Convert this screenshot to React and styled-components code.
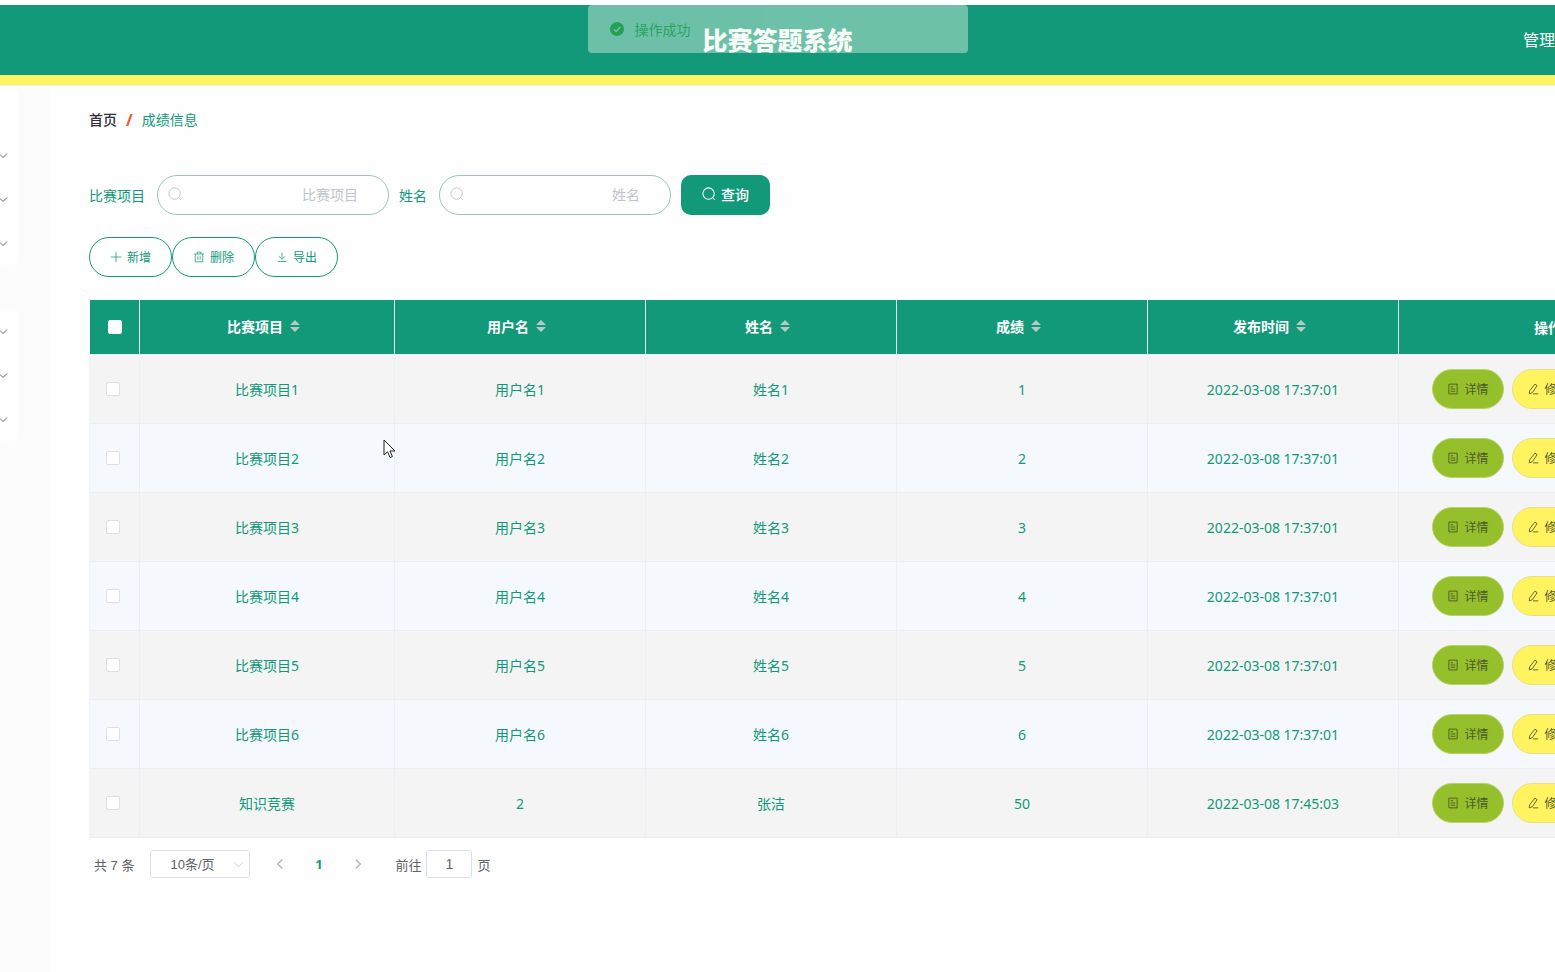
import styled, { createGlobalStyle } from "styled-components"

const GlobalStyle = createGlobalStyle`
  * {
    box-sizing: border-box;
  }

  body {
    margin: 0;
    background-color: #fefefe;
    overflow-x: hidden;
  }

  body, button, input, select {
    font-family: "Noto Sans", "Noto Sans CJK SC", sans-serif;
  }
`

const Page = styled.div`
  display: flex;
  flex-direction: column;
  min-height: 100vh;
  padding-top: 5px;
  overflow: hidden;
`

const Header = styled.header`
  display: grid;
  grid-template-columns: 1fr auto 1fr;
  align-items: center;
  height: 80px;
  background-color: #11997a;
  border-bottom: 10px solid #fff35f;
  color: #fff;

  h1 {
    grid-column: 2;
    margin: 0;
    font-size: 25px;
    line-height: 40px;
    font-weight: 900;
  }

  span {
    justify-self: end;
    font-size: 16px;
    line-height: 24px;
  }
`

const Toast = styled.div`
  position: absolute;
  top: 5px;
  left: 50%;
  transform: translateX(-50%);
  display: flex;
  align-items: center;
  gap: 10px;
  width: 380px;
  height: 48px;
  padding: 0 21px;
  border-radius: 4px;
  background-color: #f0f9eb;
  color: #4fb33a;
  font-size: 14px;
  opacity: 0.41;
`

const Body = styled.div`
  display: flex;
  flex: 1;
`

const Sidebar = styled.aside`
  display: flex;
  flex-direction: column;
  gap: 44px;
  flex: 0 0 49px;
  padding: 4px 30px 0 0;
  background-color: #fcfcfc;
`

const MenuGroup = styled.nav`
  background-color: #fefefe;
  border-radius: 0 6px 6px 0;
`

const MenuItem = styled.div`
  display: flex;
  align-items: center;
  height: 44px;
  color: #666;
`

const Main = styled.main`
  flex: 1;
  min-width: 0;
  padding: 25px 0 0 40px;
`

const Breadcrumb = styled.nav`
  display: flex;
  gap: 9px;
  margin-bottom: 45px;
  font-size: 14px;
  line-height: 20px;
  color: #11997a;

  a {
    color: #303133;
    font-weight: 500;
    text-decoration: none;
  }

  b {
    font-size: 16px;
    color: #f0592a;
  }
`

const SearchForm = styled.form`
  display: flex;
  gap: 10px;
  margin-bottom: 22px;
`

const Field = styled.div`
  display: flex;
  align-items: center;
  gap: 12px;

  label {
    font-size: 14px;
    color: #11997a;
  }
`

const InputBox = styled.div`
  display: flex;
  align-items: center;
  width: 232px;
  height: 40px;
  padding: 0 30px 2px 10px;
  border: 1px solid #9cc6ba;
  border-radius: 20px;
  color: #c0c4cc;

  input {
    flex: 1;
    min-width: 0;
    padding: 0;
    border: none;
    outline: none;
    background: none;
    font-size: 14px;
    text-align: right;
  }

  input::placeholder {
    color: #c0c4cc;
  }
`

const SearchButton = styled.button`
  display: flex;
  align-items: center;
  justify-content: center;
  gap: 5px;
  width: 89px;
  height: 40px;
  padding: 0 0 2px;
  border: none;
  border-radius: 10px;
  background-color: #11997a;
  color: #fff;
  font-size: 14px;
  font-weight: 500;
  cursor: pointer;
`

const Toolbar = styled.div`
  display: flex;
  margin-bottom: 22px;
`

const PillButton = styled.button`
  display: inline-flex;
  align-items: center;
  justify-content: center;
  gap: 5px;
  width: ${(props) => props.$width}px;
  height: 40px;
  padding: 0;
  border: 1px solid ${(props) => props.$border};
  border-radius: 20px;
  background-color: ${(props) => props.$bg};
  color: ${(props) => props.$color};
  font-size: 12px;
  white-space: nowrap;
  cursor: pointer;
`

const TableWrap = styled.div`
  overflow: hidden;
  border-top: 1px solid #f2f4f7;
  border-left: 1px solid #f2f4f7;
`

const Table = styled.table`
  width: 1608px;
  table-layout: fixed;
  border-collapse: separate;
  border-spacing: 0;
  font-size: 14px;
  color: #11997a;

  th, td {
    padding: 0;
    text-align: center;
    border-right: 1px solid #ebeef5;
    border-bottom: 1px solid #ebeef5;
  }

  th {
    height: 55px;
    background-color: #11997a;
    color: #fff;
    font-weight: 700;
  }

  td {
    height: 69px;
  }

  td:first-child {
    padding-right: 4px;
  }

  tbody tr:nth-child(odd) {
    background-color: #f4f4f4;
  }

  tbody tr:nth-child(even) {
    background-color: #f5f8fc;
  }
`

const SortLabel = styled.div`
  display: flex;
  align-items: center;
  justify-content: center;
  padding-bottom: 3px;

  svg {
    margin: 0 7px;
  }
`

const Checkbox = styled.input`
  appearance: none;
  display: block;
  width: 14px;
  height: 14px;
  margin: 0 auto;
  border: 1px solid ${(props) => (props.$head ? "#fff" : "#dcdfe6")};
  border-radius: 2px;
  background-color: #fff;
`

const Actions = styled.div`
  display: flex;
  gap: 8px;
  padding-left: 33px;
`

const Pagination = styled.div`
  display: flex;
  align-items: center;
  height: 28px;
  margin-top: 12px;
  padding-left: 5px;
  font-family: "Liberation Sans", "Noto Sans CJK SC", sans-serif;
  font-size: 13px;
  color: #606266;

  input {
    width: 46px;
    height: 28px;
    margin: 0 5px;
    padding: 0;
    border: 1px solid #dcdfe6;
    border-radius: 3px;
    background-color: #fff;
    color: #606266;
    font-family: inherit;
    font-size: 14px;
    text-align: center;
  }
`

const SizeSelect = styled.div`
  display: grid;
  align-items: center;
  width: 100px;
  margin: 0 10px 0 16px;
  color: #c0c4cc;

  select, svg {
    grid-area: 1 / 1;
  }

  select {
    appearance: none;
    width: 100px;
    height: 28px;
    padding: 0 24px 0 8px;
    border: 1px solid #dcdfe6;
    border-radius: 3px;
    background-color: #fff;
    color: #606266;
    font-family: inherit;
    font-size: 13px;
    text-align-last: center;
  }

  svg {
    justify-self: end;
    margin-right: 6px;
    pointer-events: none;
  }
`

const PageButton = styled.button`
  display: flex;
  align-items: center;
  justify-content: center;
  width: 39px;
  height: 28px;
  padding: 0;
  border: none;
  background: none;
  color: ${(props) => (props.$active ? "#11997a" : "#b4b8c0")};
  font-family: "Noto Sans", sans-serif;
  font-size: 13px;
  font-weight: 700;
`

const JumpLabel = styled.label`
  margin-left: 18px;
`

const Cursor = styled.svg`
  position: absolute;
  top: 439px;
  left: 383px;
`

const paths = {
  plus: "M8 1v14M1 8h14",
  trash: "M1.500 4h13M3 4v10.500h10V4M5.500 4V1.500h5V4M6.500 7v4.500M9.500 7v4.500",
  download: "M8 2v8.500M4 7l4 4 4-4M2 14h12",
  ticket: "M2.500 1.500h11v13h-11zM5 5h3M5 8h6M5 11h6",
  edit: "M10.500 1.500l3 2-6.500 9.500-4 1.500.500-4zM8 14.500h7",
  search: "M12.200 12.200l2.300 2.300M7.500 1a6.500 6.500 0 1 0 0 13a6.500 6.500 0 1 0 0-13",
  down: "M2 5l6 6 6-6",
  submenu: "M0 7l6 6 8-8",
  left: "M11 2l-6 6 6 6",
  right: "M5 2l6 6-6 6",
}

function Icon({ name, size = 12, stroke = 1.2 }) {
  return (
    <svg width={size} height={size} viewBox="0 0 16 16" fill="none" stroke="currentColor" strokeWidth={stroke} aria-hidden="true">
      <path d={paths[name]} />
    </svg>
  )
}

function SortIcon() {
  return (
    <svg width="10" height="12" viewBox="0 0 10 12" fill="#b5c9c8" aria-hidden="true">
      <path d="M5 0l5 5H0zM0 7h10l-5 5z" />
    </svg>
  )
}

const columns = ["比赛项目", "用户名", "姓名", "成绩", "发布时间"]

const rows = [
  ["比赛项目1", "用户名1", "姓名1", "1", "2022-03-08 17:37:01"],
  ["比赛项目2", "用户名2", "姓名2", "2", "2022-03-08 17:37:01"],
  ["比赛项目3", "用户名3", "姓名3", "3", "2022-03-08 17:37:01"],
  ["比赛项目4", "用户名4", "姓名4", "4", "2022-03-08 17:37:01"],
  ["比赛项目5", "用户名5", "姓名5", "5", "2022-03-08 17:37:01"],
  ["比赛项目6", "用户名6", "姓名6", "6", "2022-03-08 17:37:01"],
  ["知识竞赛", "2", "张洁", "50", "2022-03-08 17:45:03"],
]

const tools = [
  { icon: "plus", text: "新增" },
  { icon: "trash", text: "删除" },
  { icon: "download", text: "导出" },
]

// false = item without a submenu
const menuGroups = [
  [false, true, true, true],
  [true, true, true],
]

function SearchField({ id, label }) {
  return (
    <Field>
      <label htmlFor={id}>{label}</label>
      <InputBox>
        <Icon name="search" size={14} stroke={1.1} />
        <input id={id} type="text" placeholder={label} />
      </InputBox>
    </Field>
  )
}

export default function App() {
  return (
    <Page>
      <GlobalStyle />
      <Header>
        <h1>比赛答题系统</h1>
        <span>管理</span>
      </Header>
      <Toast role="status">
        <svg width="16" height="16" viewBox="0 0 16 16" aria-hidden="true">
          <circle cx="8" cy="8" r="7" fill="#3fae22" />
          <path d="M4.800 8.200l2.300 2.300 4.200-4.500" fill="none" stroke="#f0f9eb" strokeWidth="1.500" />
        </svg>
        操作成功
      </Toast>
      <Body>
        <Sidebar>
          {menuGroups.map((group, i) => (
            <MenuGroup key={i}>
              {group.map((hasSub, j) => (
                <MenuItem key={j}>{hasSub && <Icon name="submenu" size={8} stroke={2} />}</MenuItem>
              ))}
            </MenuGroup>
          ))}
        </Sidebar>
        <Main>
          <Breadcrumb>
            <a href="#home">首页</a>
            <b>/</b>
            <span>成绩信息</span>
          </Breadcrumb>
          <SearchForm>
            <SearchField id="project" label="比赛项目" />
            <SearchField id="name" label="姓名" />
            <SearchButton type="button">
              <Icon name="search" size={14} />
              查询
            </SearchButton>
          </SearchForm>
          <Toolbar>
            {tools.map((tool) => (
              <PillButton key={tool.text} type="button" $width={83} $border="#11997a" $bg="#fff" $color="#11997a">
                <Icon name={tool.icon} stroke={1} />
                {tool.text}
              </PillButton>
            ))}
          </Toolbar>
          <TableWrap>
            <Table>
              <colgroup>
                <col width="50" />
                <col width="255" />
                <col width="251" />
                <col width="251" />
                <col width="251" />
                <col width="251" />
                <col width="299" />
              </colgroup>
              <thead>
                <tr>
                  <th><Checkbox type="checkbox" aria-label="全选" $head /></th>
                  {columns.map((column) => (
                    <th key={column}>
                      <SortLabel>{column}<SortIcon /></SortLabel>
                    </th>
                  ))}
                  <th>操作</th>
                </tr>
              </thead>
              <tbody>
                {rows.map((row) => (
                  <tr key={row[0]}>
                    <td><Checkbox type="checkbox" aria-label={row[0]} /></td>
                    {row.map((cell, i) => (
                      <td key={i}>{cell}</td>
                    ))}
                    <td>
                      <Actions>
                        <PillButton type="button" $width={72} $border="#b5d46a" $bg="#95bf2b" $color="#4c5a2a">
                          <Icon name="ticket" />
                          详情
                        </PillButton>
                        <PillButton type="button" $width={72} $border="#e6e08a" $bg="#fff35f" $color="#5c5a33">
                          <Icon name="edit" />
                          修改
                        </PillButton>
                      </Actions>
                    </td>
                  </tr>
                ))}
              </tbody>
            </Table>
          </TableWrap>
          <Pagination>
            <span>共 7 条</span>
            <SizeSelect>
              <select aria-label="每页条数">
                <option>10条/页</option>
              </select>
              <Icon name="down" size={11} />
            </SizeSelect>
            <PageButton type="button" aria-label="上一页"><Icon name="left" stroke={2} /></PageButton>
            <PageButton type="button" $active>1</PageButton>
            <PageButton type="button" aria-label="下一页"><Icon name="right" stroke={2} /></PageButton>
            <JumpLabel htmlFor="jump">前往</JumpLabel>
            <input id="jump" type="text" defaultValue="1" />
            <span>页</span>
          </Pagination>
        </Main>
      </Body>
      <Cursor width="13" height="20" viewBox="0 0 13 20" aria-hidden="true">
        <path d="M1 1v15l3.500-3.200 2.600 5.700 2.300-1-2.500-5.500H12z" fill="#fff" stroke="#222" />
      </Cursor>
    </Page>
  )
}
